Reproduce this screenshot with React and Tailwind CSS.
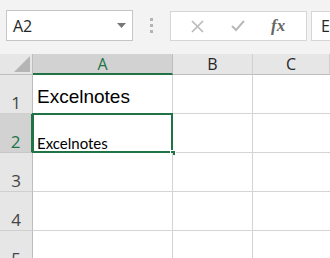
const cols = ["A", "B", "C"];
const rows = [1, 2, 3, 4, 5];

const Toolbar = () => {
  return (
    <div className="h-[54px] bg-[#f3f3f3] flex items-start pt-[10px] pl-[6px] overflow-hidden">
      <div className="shrink-0 w-[127px] h-[31px] bg-white border border-[#c6c6c6] flex items-center pl-[6px] pr-[6px]">
        <span className="text-[16px] text-[#262626]" style={{ fontFamily: "'Open Sans', sans-serif" }}>
          A2
        </span>
        <svg className="ml-auto" width="9" height="5" viewBox="0 0 9 5">
          <path d="M0 0 L9 0 L4.5 5 Z" fill="#777" />
        </svg>
      </div>
      <div className="shrink-0 w-[37px] h-[31px] flex flex-col items-center justify-center gap-[3px]">
        <div className="w-[3px] h-[3px] bg-[#b4b4b4]" />
        <div className="w-[3px] h-[3px] bg-[#b4b4b4]" />
        <div className="w-[3px] h-[3px] bg-[#b4b4b4]" />
      </div>
      <div className="shrink-0 w-[137px] h-[30px] mt-[1px] bg-white border border-[#d6d6d6] flex items-center">
        <svg className="ml-[20px]" width="13" height="13" viewBox="0 0 13 13">
          <path d="M1 1 L12 12 M12 1 L1 12" stroke="#b9b9b9" strokeWidth="1.6" />
        </svg>
        <svg className="ml-[27px]" width="14" height="12" viewBox="0 0 14 12">
          <path d="M1 6 L5 10 L13 1" stroke="#b9b9b9" strokeWidth="2" fill="none" />
        </svg>
        <span
          className="ml-[26px] text-[17px] italic text-[#666] font-bold"
          style={{ fontFamily: "'Liberation Serif', serif" }}
        >
          fx
        </span>
      </div>
      <div className="shrink-0 ml-[4px] w-[60px] h-[30px] mt-[1px] bg-white border border-[#d6d6d6] flex items-center pl-[9px] overflow-hidden">
        <span className="text-[16px] text-[#262626] whitespace-nowrap" style={{ fontFamily: "'Open Sans', sans-serif" }}>
          Excelnotes
        </span>
      </div>
    </div>
  );
};

const Row = ({ r }) => {
  const head = { fontFamily: "'Open Sans', sans-serif" };
  return (
    <>
      <div
        className={
          r === 2
            ? "bg-[#d2d2d2] border-b border-[#c6c6c6] border-r-2 border-r-[#217346] flex items-end justify-center text-[17px] leading-[20px] text-[#217346]"
            : "bg-[#e6e6e6] border-b border-[#cfcfcf] border-r border-r-[#bdbdbd] flex items-end justify-center text-[17px] leading-[20px] text-[#444]"
        }
        style={head}
      >
        {r}
      </div>
      <div className="relative bg-white border-r border-b border-[#d4d4d4] flex items-end pl-[4px]">
        {r === 1 && (
          <span className="text-[19px] text-black leading-[24px] pb-[4px]" style={{ fontFamily: "'Liberation Sans', Arial, sans-serif" }}>
            Excelnotes
          </span>
        )}
        {r === 2 && (
          <>
            <span className="text-[15px] text-black leading-[18px]" style={{ fontFamily: "Lato, 'Liberation Sans', sans-serif" }}>
              Excelnotes
            </span>
            <div className="absolute -left-[1px] -top-[1px] right-[-1px] bottom-[-1px] border-2 border-[#217346]" />
            <div className="absolute right-[-4px] bottom-[-4px] w-[6px] h-[6px] bg-[#217346] border border-white" />
          </>
        )}
      </div>
      <div className="bg-white border-r border-b border-[#d4d4d4]" />
      <div className="bg-white border-b border-[#d4d4d4]" />
    </>
  );
};

const Sheet = () => {
  const head = { fontFamily: "'Open Sans', sans-serif" };
  return (
    <div className="grid grid-cols-[33px_140px_80px_1fr] grid-rows-[21px_39px_39px_39px_39px_39px]">
      <div className="bg-[#e6e6e6] border-r border-b border-[#bdbdbd] flex items-end justify-end pr-[2px] pb-[2px]">
        <svg width="16" height="16" viewBox="0 0 16 16">
          <path d="M16 0 L16 16 L0 16 Z" fill="#b5b5b5" />
        </svg>
      </div>
      {cols.map((c) => (
        <div
          key={c}
          className={
            c === "A"
              ? "bg-[#d2d2d2] border-r border-[#bdbdbd] border-b-2 border-b-[#217346] flex items-center justify-center text-[16px] text-[#217346]"
              : "bg-[#e6e6e6] border-r border-b border-[#d0d0d0] border-b-[#bdbdbd] flex items-center justify-center text-[16px] text-[#262626]"
          }
          style={head}
        >
          {c}
        </div>
      ))}
      {rows.map((r) => (
        <Row key={r} r={r} />
      ))}
    </div>
  );
};

const App = () => {
  return (
    <div className="w-[330px] h-[258px] overflow-hidden bg-white">
      <Toolbar />
      <Sheet />
    </div>
  );
};

export default App;
